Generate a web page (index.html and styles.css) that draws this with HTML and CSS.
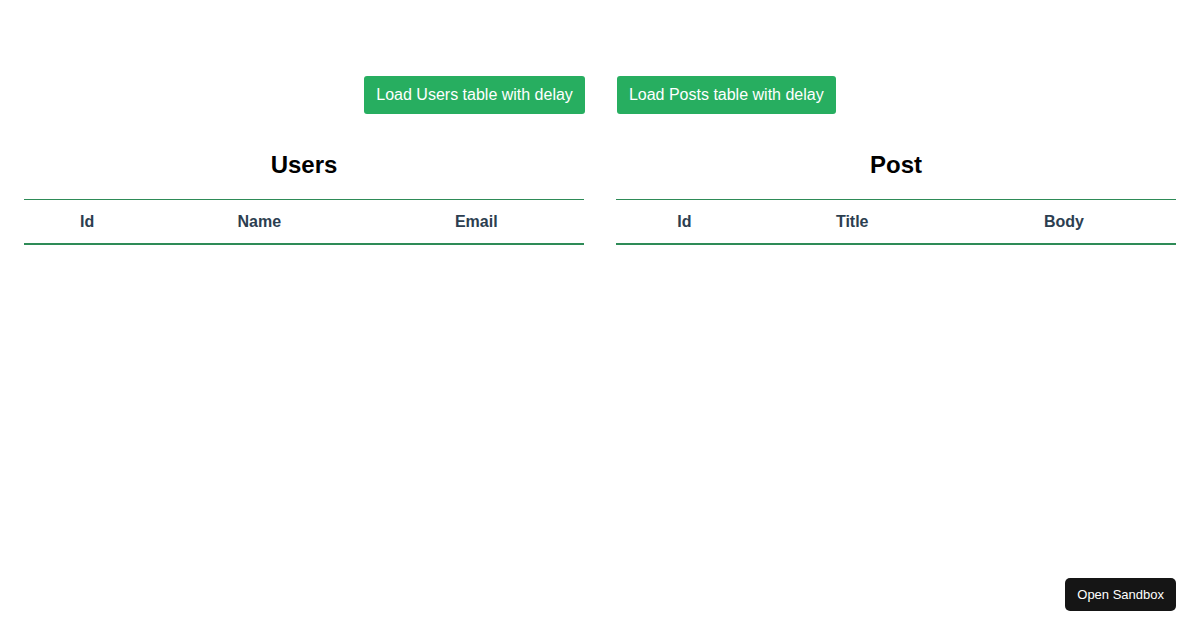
FILE: index.html
```html
<!DOCTYPE html>
<html lang="en">
<head>
    <meta charset="UTF-8">
    <meta name="viewport" content="width=device-width, initial-scale=1.0">
    <title>Tables</title>
    <link rel="stylesheet" href="styles.css">
</head>
<body>
    <div id="app">
        <div class="actions">
            <button class="btn">Load Users table with delay</button>
            <button class="btn">Load Posts table with delay</button>
        </div>
        <div class="tables">
            <div class="panel">
                <h2 class="title">Users</h2>
                <table class="grid">
                    <thead>
                        <tr>
                            <th>Id</th>
                            <th>Name</th>
                            <th>Email</th>
                        </tr>
                    </thead>
                    <tbody></tbody>
                </table>
            </div>
            <div class="panel">
                <h2 class="title">Post</h2>
                <table class="grid">
                    <thead>
                        <tr>
                            <th>Id</th>
                            <th>Title</th>
                            <th>Body</th>
                        </tr>
                    </thead>
                    <tbody></tbody>
                </table>
            </div>
        </div>
    </div>
    <a class="sandbox">Open Sandbox</a>
</body>
</html>
```

FILE: styles.css
```css
* {
    margin: 0;
    padding: 0;
    box-sizing: border-box;
}

body {
    font-family: "Liberation Sans", Arial, Helvetica, sans-serif;
    color: #2c3e50;
    background: #fff;
}

#app {
    padding: 76px 24px 0;
}

.actions {
    display: flex;
    justify-content: center;
    gap: 32px;
}

.btn {
    font-family: inherit;
    font-size: 16px;
    line-height: 18px;
    color: #fff;
    background-color: #27ae60;
    border: none;
    border-radius: 3px;
    padding: 10px 12px;
    cursor: pointer;
}

.tables {
    display: flex;
    gap: 32px;
    margin-top: 37px;
}

.panel {
    flex: 1;
}

.title {
    font-size: 24px;
    line-height: 28px;
    color: #000;
    text-align: center;
    margin-bottom: 20px;
}

.grid {
    width: 100%;
    border-collapse: collapse;
}

.grid th {
    font-size: 16px;
    line-height: 19px;
    font-weight: bold;
    color: #2c3e50;
    padding: 12px 13px;
    border-top: 1px solid #2e8b57;
    border-bottom: 2px solid #2e8b57;
}

.sandbox {
    position: fixed;
    right: 24px;
    bottom: 19px;
    background: #151515;
    color: #fff;
    font-size: 13px;
    line-height: 15px;
    padding: 9px 12px;
    border-radius: 5px;
}
```
